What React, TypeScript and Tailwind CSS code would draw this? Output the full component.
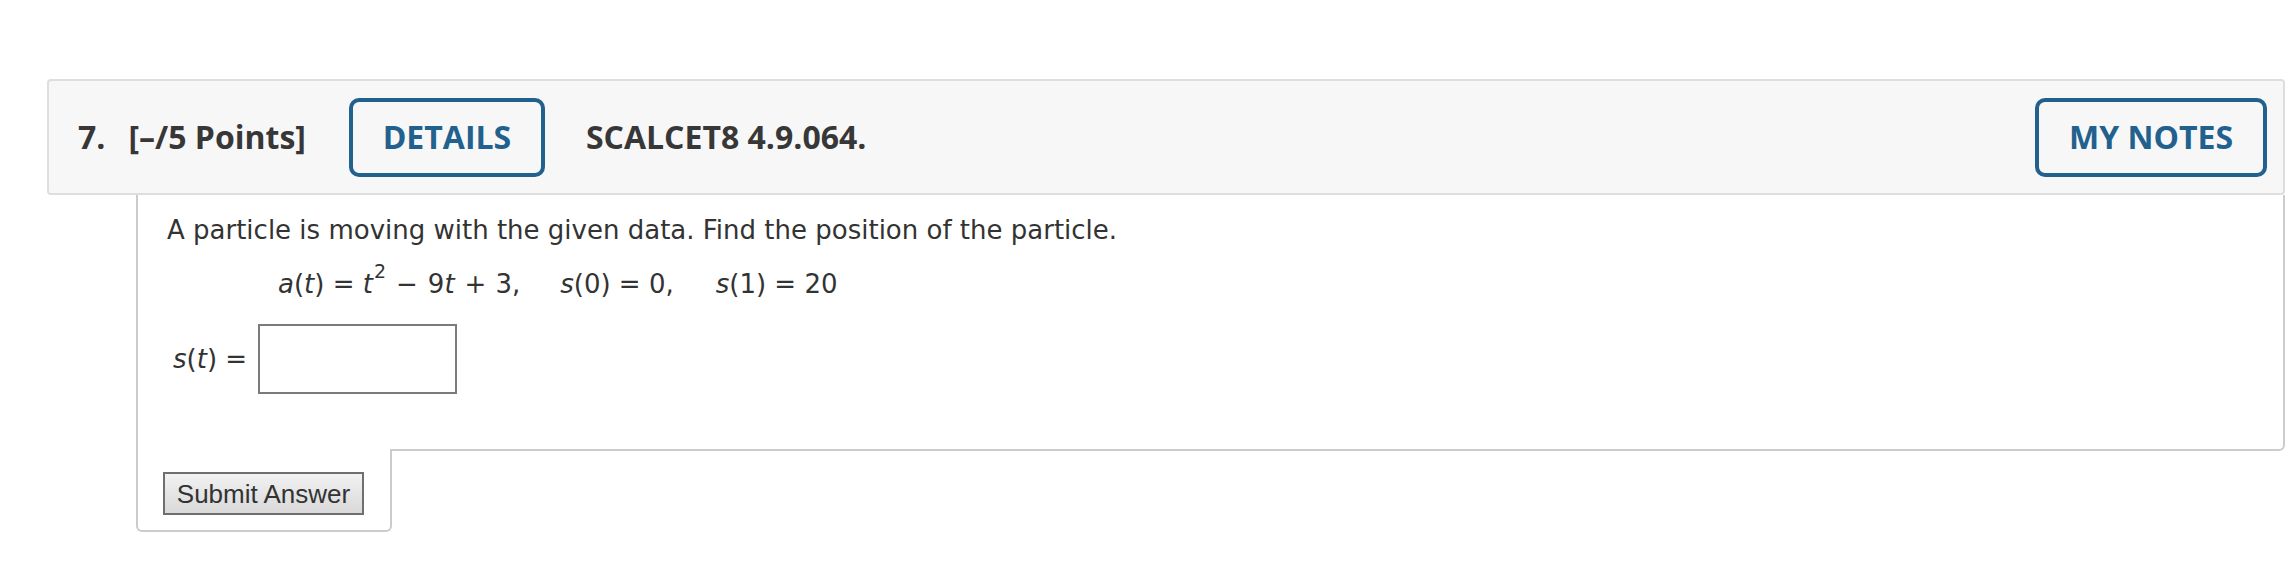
import React from "react";

export default function App() {
  const sans = { fontFamily: '"Open Sans", "DejaVu Sans", sans-serif' };
  const verdana = { fontFamily: '"DejaVu Sans", Verdana, sans-serif' };
  return (
    <div className="w-[2294px] h-[563px] bg-white pt-[79px] pl-[47px]">
      <div className="w-[2238px]">
        <div
          className="h-[116px] border-2 border-[#dedede] bg-[#f7f7f7] rounded-[4px] flex items-center pl-[29px] pr-[16px] text-[32px] font-bold text-[#373737]"
          style={sans}
        >
          <span>7.</span>
          <span className="ml-[23px]">[–/5 Points]</span>
          <button className="ml-[43px] h-[79px] w-[196px] border-[4px] border-[#22618e] rounded-[10px] text-[#22618e] text-[32px] font-bold flex items-center justify-center">
            DETAILS
          </button>
          <span className="ml-[41px]">SCALCET8 4.9.064.</span>
          <button className="ml-auto h-[79px] w-[232px] border-[4px] border-[#22618e] rounded-[10px] text-[#22618e] text-[32px] font-bold flex items-center justify-center">
            MY NOTES
          </button>
        </div>
        <div className="ml-[89px]">
          <div
            className="h-[256px] border-x-2 border-b-2 border-[#cccccc] rounded-br-[6px] pl-[29px] pt-[17px] text-[26px] text-[#333333]"
            style={verdana}
          >
            <div className="leading-[36px]">
              A particle is moving with the given data. Find the position of the particle.
            </div>
            <div className="leading-[36px] mt-[18px] ml-[111px] whitespace-pre">
              <i>a</i>(<i>t</i>) = <i>t</i>
              <span className="ml-[1px] text-[19px] leading-[0] align-[15px]">2</span>
              <span className="ml-[10px] mr-[10px]">−</span>
              9<i>t</i>
              <span className="ml-[10px] mr-[9px]">+</span>
              3,
              <span className="inline-block w-[40px]"></span>
              <i>s</i>
              {"(0) = 0,"}
              <span className="inline-block w-[42px]"></span>
              <i>s</i>
              {"(1) = 20"}
            </div>
            <div className="mt-[22px] flex items-center">
              <span className="ml-[6px] leading-[36px] whitespace-pre">
                <i>s</i>(<i>t</i>) =
              </span>
              <input
                type="text"
                className="ml-[11px] w-[199px] h-[70px] border-2 border-[#7b7b7b] bg-white outline-none"
              />
            </div>
          </div>
          <div className="relative -mt-[2px] w-[256px] h-[83px] bg-white border-x-2 border-b-2 border-[#cccccc] rounded-b-[6px] pl-[25px] pt-[23px]">
            <button
              className="w-[201px] h-[43px] border-2 border-[#6f6f6f] bg-gradient-to-b from-[#f2f2f2] to-[#d9d9d9] text-[26px] text-[#333333] flex items-center justify-center leading-none"
              style={{ fontFamily: '"Liberation Sans", Arial, sans-serif' }}
            >
              Submit Answer
            </button>
          </div>
        </div>
      </div>
    </div>
  );
}
